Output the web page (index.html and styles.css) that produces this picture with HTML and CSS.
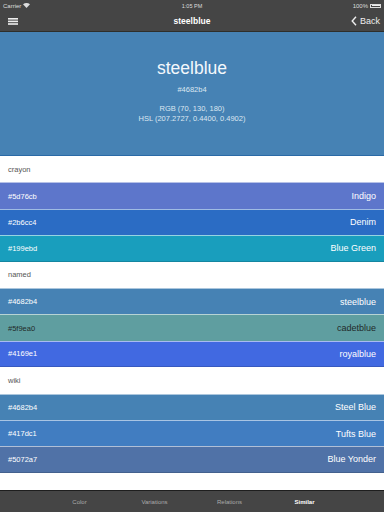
FILE: index.html
```html
<!DOCTYPE html>
<html>
<head>
<meta charset="utf-8">
<link rel="stylesheet" href="styles.css">
</head>
<body>
<div class="app">
  <div class="topbar">
    <div class="status">
      <div class="st-left">Carrier
        <svg class="wifi" width="7" height="5" viewBox="0 0 7 5"><path d="M0 1.2 Q3.5 -1 7 1.2 L3.5 5 Z" fill="#ddd"/></svg>
      </div>
      <div class="st-mid">1:05 PM</div>
      <div class="st-right">100%
        <span class="battery"><span class="bfill"></span></span>
      </div>
    </div>
    <div class="nav">
      <svg class="menu" width="10" height="7" viewBox="0 0 10 7"><rect y="0" width="10" height="1.6" fill="#eee"/><rect y="2.6" width="10" height="1.6" fill="#eee"/><rect y="5.2" width="10" height="1.6" fill="#eee"/></svg>
      <div class="nav-title">steelblue</div>
      <div class="back">
        <svg width="6" height="10" viewBox="0 0 6 10"><path d="M5 0.8 L1.2 5 L5 9.2" fill="none" stroke="#eee" stroke-width="1.4"/></svg>
        <span>Back</span>
      </div>
    </div>
  </div>
  <div class="hero">
    <div class="hero-name">steelblue</div>
    <div class="hero-hex">#4682b4</div>
    <div class="hero-vals">RGB (70, 130, 180)<br>HSL (207.2727, 0.4400, 0.4902)</div>
  </div>
  <div class="list">
    <div class="section">crayon</div>
    <div class="row" style="background:#5d76cb"><span>#5d76cb</span><span class="nm">Indigo</span></div>
    <div class="row" style="background:#2b6cc4"><span>#2b6cc4</span><span class="nm">Denim</span></div>
    <div class="row last" style="background:#199ebd"><span>#199ebd</span><span class="nm">Blue Green</span></div>
    <div class="section">named</div>
    <div class="row" style="background:#4682b4"><span>#4682b4</span><span class="nm">steelblue</span></div>
    <div class="row dark" style="background:#5f9ea0"><span>#5f9ea0</span><span class="nm">cadetblue</span></div>
    <div class="row last" style="background:#4169e1"><span>#4169e1</span><span class="nm">royalblue</span></div>
    <div class="section">wiki</div>
    <div class="row" style="background:#4682b4"><span>#4682b4</span><span class="nm">Steel Blue</span></div>
    <div class="row" style="background:#417dc1"><span>#417dc1</span><span class="nm">Tufts Blue</span></div>
    <div class="row last" style="background:#5072a7"><span>#5072a7</span><span class="nm">Blue Yonder</span></div>
  </div>
  <div class="tabbar">
    <div class="tab">Color</div>
    <div class="tab">Variations</div>
    <div class="tab">Relations</div>
    <div class="tab active">Similar</div>
  </div>
</div>
</body>
</html>
```
FILE: styles.css
```css
* { box-sizing: border-box; }
html, body { margin: 0; padding: 0; }
body {
  width: 384px;
  height: 512px;
  overflow: hidden;
  font-family: "Liberation Sans", Arial, sans-serif;
  background: #fff;
}
.app {
  display: flex;
  flex-direction: column;
  height: 512px;
}
.topbar {
  background: #454545;
  border-bottom: 1px solid #2e2e2a;
  height: 32px;
  flex: none;
}
.status {
  height: 11px;
  display: flex;
  align-items: center;
  justify-content: space-between;
  padding: 0 3px;
  font-size: 6px;
  color: #ddd;
  position: relative;
}
.st-left { display: flex; align-items: center; gap: 2px; }
.st-mid {
  position: absolute;
  left: 0; right: 0;
  text-align: center;
  font-size: 5.5px;
}
.st-right { display: flex; align-items: center; gap: 2px; }
.battery {
  display: inline-block;
  width: 11px;
  height: 4px;
  border: 0.5px solid #ddd;
  padding: 0.5px;
}
.bfill { display: block; width: 100%; height: 100%; background: #eee; }
.nav {
  height: 20px;
  display: flex;
  align-items: center;
  justify-content: space-between;
  padding: 0 4px 0 8px;
  position: relative;
}
.nav-title {
  position: absolute;
  left: 0; right: 0;
  text-align: center;
  color: #fff;
  font-weight: bold;
  font-size: 8.5px;
}
.back {
  display: flex;
  align-items: center;
  gap: 3px;
  color: #eee;
  font-size: 9px;
}
.hero {
  height: 124px;
  flex: none;
  background: #4682b4;
  border-bottom: 1px solid #2a6aa6;
  display: flex;
  flex-direction: column;
  align-items: center;
  padding-top: 26px;
  color: #eef3f8;
}
.hero-name {
  font-size: 17.5px;
  line-height: 20px;
  color: #f4f8fc;
}
.hero-hex {
  font-size: 7.5px;
  margin-top: 7px;
  color: #dce7f1;
}
.hero-vals {
  font-size: 7.5px;
  line-height: 9.5px;
  margin-top: 10px;
  text-align: center;
  color: #dce7f1;
}
.list {
  flex: 1;
  display: flex;
  flex-direction: column;
}
.section {
  height: 26.4px;
  flex: none;
  display: flex;
  align-items: center;
  padding-left: 8px;
  font-size: 7.5px;
  color: #555;
  background: #fff;
}
.row {
  height: 26.4px;
  flex: none;
  display: flex;
  align-items: center;
  justify-content: space-between;
  padding: 0 8px;
  color: #fff;
  font-size: 7.5px;
  border-top: 1px solid rgba(255,255,255,0.55);
}
.row.last { border-bottom: 1px solid rgba(0,0,0,0.15); }
.row.dark { color: #1f2a2a; }
.row .nm { font-size: 9px; }
.tabbar {
  height: 22px;
  flex: none;
  margin-top: auto;
  background: #454545;
  border-top: 1px solid #1e1e1e;
  display: flex;
  justify-content: center;
  align-items: center;
  padding: 0 42px;
}
.tab {
  flex: 1;
  text-align: center;
  font-size: 6px;
  color: #aaa;
}
.tab.active { color: #fff; font-weight: bold; }
```
